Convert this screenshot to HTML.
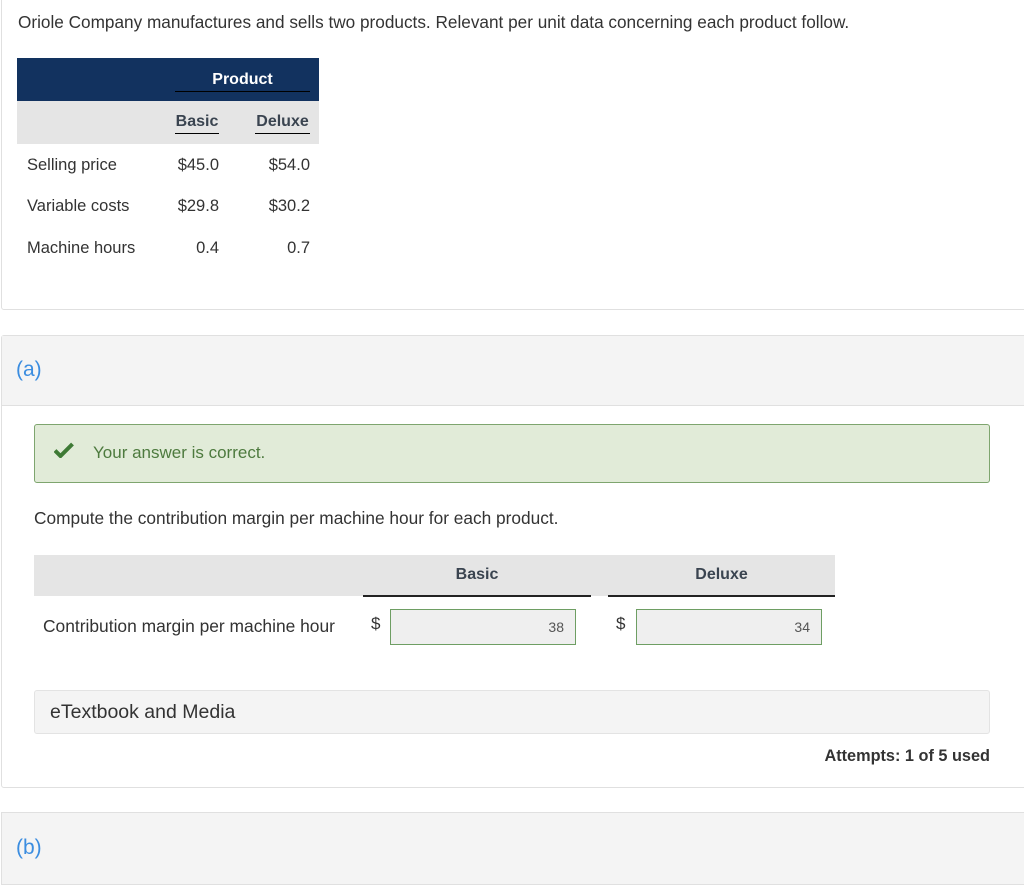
<!DOCTYPE html>
<html><head><style>
*{box-sizing:border-box;margin:0;padding:0}
body{width:1024px;height:893px;background:#fff;font-family:"Liberation Sans",sans-serif;color:#333;position:relative;overflow:hidden}
.a{position:absolute}
.card{position:absolute;border:1px solid #e0e0e0;border-radius:3px}
</style></head><body>
<div class="card" style="left:1px;top:-5px;width:1030px;height:315px"></div>
<div class="a" style="left:18px;top:12px;font-size:17.2px;color:#333">Oriole Company manufactures and sells two products. Relevant per unit data concerning each product follow.</div>
<div class="a" style="left:17px;top:58px;width:302px;height:43px;background:#12325f"></div>
<div class="a" style="left:175px;top:71px;width:135px;text-align:center;color:#fff;font-weight:bold;font-size:16px">Product</div>
<div class="a" style="left:175px;top:91px;width:135px;height:1px;background:#000"></div>
<div class="a" style="left:17px;top:101px;width:302px;height:43px;background:#e5e5e5"></div>
<div class="a" style="left:175px;top:113px;width:44px;text-align:center;font-weight:bold;font-size:16px;color:#3a4450;border-bottom:1px solid #000;padding-bottom:2px;white-space:nowrap">Basic</div>
<div class="a" style="left:255px;top:113px;width:55px;text-align:center;font-weight:bold;font-size:16px;color:#3a4450;border-bottom:1px solid #000;padding-bottom:2px;white-space:nowrap">Deluxe</div>
<div class="a" style="left:27px;top:155px;font-size:16.5px;line-height:20px">Selling price<br><span style="display:block;margin-top:21px">Variable costs</span><span style="display:block;margin-top:22px">Machine hours</span></div>
<div class="a" style="left:150px;top:155px;width:69px;text-align:right;font-size:16.5px;line-height:20px">$45.0<br><span style="display:block;margin-top:21px">$29.8</span><span style="display:block;margin-top:22px">0.4</span></div>
<div class="a" style="left:240px;top:155px;width:70px;text-align:right;font-size:16.5px;line-height:20px">$54.0<br><span style="display:block;margin-top:21px">$30.2</span><span style="display:block;margin-top:22px">0.7</span></div>

<div class="card" style="left:1px;top:335px;width:1030px;height:453px"></div>
<div class="a" style="left:2px;top:336px;width:1030px;height:70px;background:#f4f4f4;border-bottom:1px solid #e0e0e0"></div>
<div class="a" style="left:16px;top:358px;font-size:21px;color:#3b8de0">(a)</div>
<div class="a" style="left:34px;top:424px;width:956px;height:59px;background:#e1ebd8;border:1px solid #7ea56e;border-radius:3px"></div>
<svg class="a" style="left:54px;top:442px" width="20" height="16" viewBox="0 0 20 16"><path d="M1 8.5 L6.5 14 L18.5 2" stroke="#3e7a35" stroke-width="4" fill="none"/></svg>
<div class="a" style="left:93px;top:443px;font-size:17px;color:#4d7a3e">Your answer is correct.</div>
<div class="a" style="left:34px;top:508px;font-size:17.3px;color:#333">Compute the contribution margin per machine hour for each product.</div>
<div class="a" style="left:34px;top:555px;width:801px;height:41px;background:#e5e5e5"></div>
<div class="a" style="left:363px;top:566px;width:228px;text-align:center;font-weight:bold;font-size:16px;color:#3a4450">Basic</div>
<div class="a" style="left:608px;top:566px;width:227px;text-align:center;font-weight:bold;font-size:16px;color:#3a4450">Deluxe</div>
<div class="a" style="left:363px;top:595px;width:228px;height:2px;background:#222"></div>
<div class="a" style="left:608px;top:595px;width:227px;height:2px;background:#222"></div>
<div class="a" style="left:43px;top:616px;font-size:17.4px">Contribution margin per machine hour</div>
<div class="a" style="left:371px;top:614px;font-size:17px">$</div>
<div class="a" style="left:390px;top:609px;width:186px;height:36px;background:#efefef;border:1px solid #6e9e63;text-align:right;padding:9px 11px;font-size:14px;color:#555">38</div>
<div class="a" style="left:616px;top:614px;font-size:17px">$</div>
<div class="a" style="left:636px;top:609px;width:186px;height:36px;background:#efefef;border:1px solid #6e9e63;text-align:right;padding:9px 11px;font-size:14px;color:#555">34</div>
<div class="a" style="left:34px;top:690px;width:956px;height:44px;background:#f4f4f4;border:1px solid #e3e3e3;border-radius:3px"></div>
<div class="a" style="left:50px;top:701px;font-size:19.5px;color:#333">eTextbook and Media</div>
<div class="a" style="left:690px;top:747px;width:300px;text-align:right;font-weight:bold;font-size:16.3px;color:#333">Attempts: 1 of 5 used</div>

<div class="a" style="left:1px;top:812px;width:1030px;height:73px;background:#f4f4f4;border:1px solid #e0e0e0"></div>
<div class="a" style="left:16px;top:836px;font-size:21px;color:#3b8de0">(b)</div>
</body></html>
